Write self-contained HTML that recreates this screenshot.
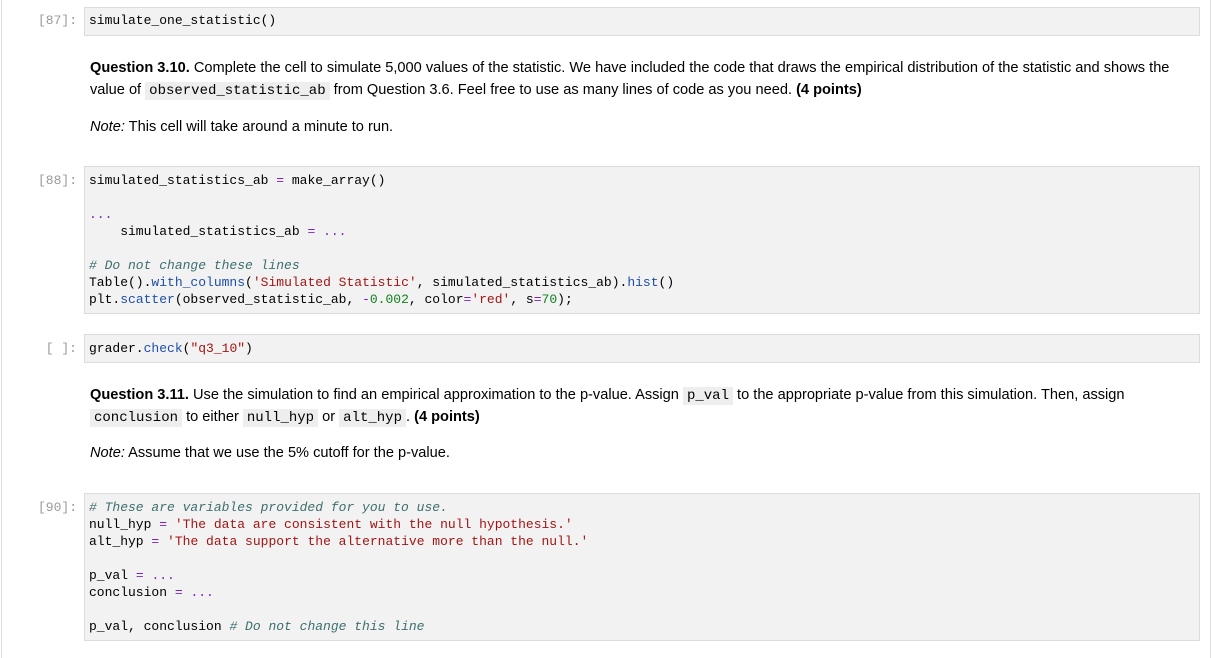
<!DOCTYPE html>
<html><head><meta charset="utf-8"><style>
body{margin:0;width:1213px;height:658px;background:#fff;position:relative;overflow:hidden;font-family:"Liberation Sans",sans-serif;}
.lb{position:absolute;left:1px;top:0;width:1px;height:658px;background:#e0e0e0}
.rb{position:absolute;left:1210px;top:0;width:1px;height:658px;background:#e0e0e0}
.cell{position:absolute;left:84px;width:1116px;background:#f2f2f2;border:1px solid #dcdcdc;box-sizing:border-box}
.code{position:absolute;left:89px;font-family:"Liberation Mono",monospace;font-size:13px;line-height:17px;white-space:pre;color:#000}
.pr{position:absolute;right:1136px;font-family:"Liberation Mono",monospace;font-size:13px;color:#999;white-space:pre}
.md{position:absolute;left:90px;font-size:14.6px;color:#000;white-space:nowrap}
.ic{font-family:"Liberation Mono",monospace;background:#eee;padding:1px 4px;font-size:14px}
.k{color:#7a22c8}.f{color:#1d4fa8}.s{color:#a31515}.c{color:#3f6e6e;font-style:italic}.n{color:#12801e}
</style></head><body>
<div class="lb"></div><div class="rb"></div>
<div class="cell" style="top:7px;height:29px"></div>
<div class="pr" style="top:13px">[87]:</div>
<div class="code" style="top:12px">simulate_one_statistic()</div>
<div class="md" style="top:60px"><b>Question 3.10.</b> Complete the cell to simulate 5,000 values of the statistic. We have included the code that draws the empirical distribution of the statistic and shows the</div>
<div class="md" style="top:82px">value of <span class="ic">observed_statistic_ab</span> from Question 3.6. Feel free to use as many lines of code as you need. <b>(4 points)</b></div>
<div class="md" style="top:119px"><i>Note:</i> This cell will take around a minute to run.</div>
<div class="cell" style="top:166px;height:148px"></div>
<div class="pr" style="top:173px">[88]:</div>
<div class="code" style="top:172px">simulated_statistics_ab <span class="k">=</span> make_array()

<span class="k">...</span>
    simulated_statistics_ab <span class="k">=</span> <span class="k">...</span>

<span class="c"># Do not change these lines</span>
Table().<span class="f">with_columns</span>(<span class="s">'Simulated Statistic'</span>, simulated_statistics_ab).<span class="f">hist</span>()
plt.<span class="f">scatter</span>(observed_statistic_ab, <span class="k">-</span><span class="n">0.002</span>, color<span class="k">=</span><span class="s">'red'</span>, s<span class="k">=</span><span class="n">70</span>);</div>
<div class="cell" style="top:334px;height:29px"></div>
<div class="pr" style="top:341px">[ ]:</div>
<div class="code" style="top:340px">grader.<span class="f">check</span>(<span class="s">"q3_10"</span>)</div>
<div class="md" style="top:387px"><b>Question 3.11.</b> Use the simulation to find an empirical approximation to the p-value. Assign <span class="ic">p_val</span> to the appropriate p-value from this simulation. Then, assign</div>
<div class="md" style="top:409px"><span class="ic">conclusion</span> to either <span class="ic">null_hyp</span> or <span class="ic">alt_hyp</span>. <b>(4 points)</b></div>
<div class="md" style="top:445px"><i>Note:</i> Assume that we use the 5% cutoff for the p-value.</div>
<div class="cell" style="top:493px;height:148px"></div>
<div class="pr" style="top:500px">[90]:</div>
<div class="code" style="top:499px"><span class="c"># These are variables provided for you to use.</span>
null_hyp <span class="k">=</span> <span class="s">'The data are consistent with the null hypothesis.'</span>
alt_hyp <span class="k">=</span> <span class="s">'The data support the alternative more than the null.'</span>

p_val <span class="k">=</span> <span class="k">...</span>
conclusion <span class="k">=</span> <span class="k">...</span>

p_val, conclusion <span class="c"># Do not change this line</span></div>
</body></html>
